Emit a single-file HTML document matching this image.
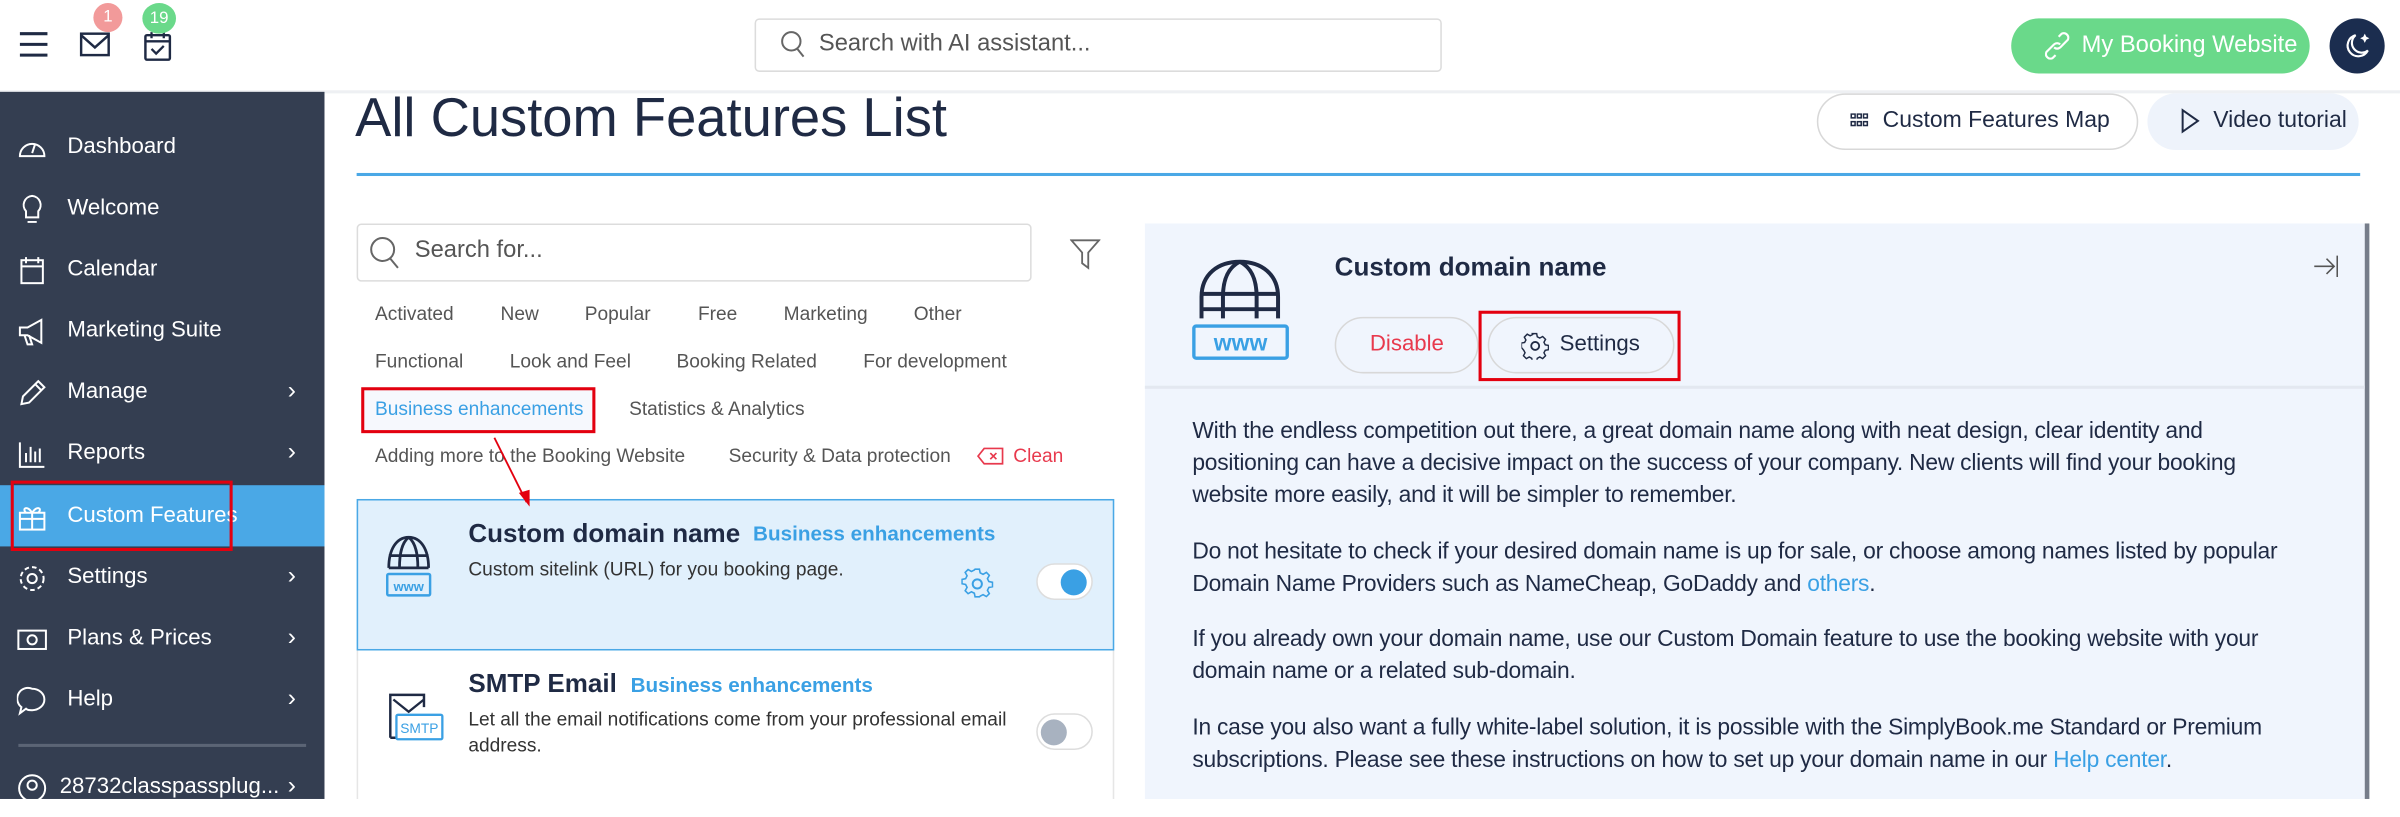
<!DOCTYPE html>
<html><head><meta charset="utf-8"><style>
*{margin:0;padding:0;box-sizing:border-box}
html,body{width:2400px;height:799px;overflow:hidden;background:#fff}
#s{position:absolute;left:0;top:0;width:1568px;height:522px;transform:scale(1.5306);transform-origin:0 0;font-family:"Liberation Sans",sans-serif;color:#1f2a44}
.a{position:absolute;white-space:nowrap}
.side{position:absolute;left:0;top:60px;width:212px;height:462px;background:#343e51}
.si{position:absolute;left:0;width:212px;height:40px;color:#fff;font-size:14.5px;line-height:40px;padding-left:44px}
.si svg{position:absolute;left:11px;top:11px}
.si .ch{position:absolute;left:188px;top:0;font-size:16px;color:#fff}
.tag{position:absolute;font-size:12.5px;color:#555;white-space:nowrap}
.para{position:absolute;left:779px;font-size:14.9px;line-height:21px;color:#1f2a44;white-space:nowrap;letter-spacing:-0.15px}
.lnk{color:#3aa0e4}
</style></head><body><div id="s">
<div class="a" style="left:0;top:59px;width:1568px;height:2px;background:#eef0f3"></div>
<svg class="a" style="left:12px;top:20px" width="20" height="18"><path d="M1 2h18M1 9h18M1 16h18" stroke="#1f2a44" stroke-width="2"/></svg>
<svg class="a" style="left:52px;top:21px" width="20" height="16"><rect x="1" y="1" width="18" height="14" fill="none" stroke="#1f2a44" stroke-width="1.6"/><path d="M1 2l9 8 9-8" fill="none" stroke="#1f2a44" stroke-width="1.6"/></svg>
<div class="a" style="left:61px;top:2px;width:19px;height:19px;border-radius:50%;background:#f29a9a;color:#fff;font-size:11px;text-align:center;line-height:19px">1</div>
<svg class="a" style="left:94px;top:20px" width="18" height="20"><rect x="1" y="3" width="16" height="16" rx="1" fill="none" stroke="#1f2a44" stroke-width="1.6"/><path d="M1 7h16M5 1v4M13 1v4M5 12l3 3 5-5" fill="none" stroke="#1f2a44" stroke-width="1.5"/></svg>
<div class="a" style="left:93px;top:2px;width:22px;height:20px;border-radius:50%;background:#6ad98a;color:#fff;font-size:11px;text-align:center;line-height:20px">19</div>
<div class="a" style="left:493px;top:12px;width:449px;height:35px;border:1px solid #dcdcdc;border-radius:3px"></div>
<svg class="a" style="left:510px;top:20px" width="16" height="18"><circle cx="7" cy="7" r="6" fill="none" stroke="#666" stroke-width="1.3"/><path d="M11 12l4 5" stroke="#666" stroke-width="1.3"/></svg>
<div class="a" style="left:535px;top:20px;font-size:15.5px;color:#555">Search with AI assistant...</div>
<div class="a" style="left:1314px;top:12px;width:195px;height:36px;border-radius:18px;background:#6ad98a"></div>
<svg class="a" style="left:1336px;top:21px" width="16" height="18"><path d="M9 3l2-2a3 3 0 014 4l-5 5a3 3 0 01-4 0M7 15l-2 2a3 3 0 01-4-4l5-5a3 3 0 014 0" fill="none" stroke="#fff" stroke-width="1.4"/></svg>
<div class="a" style="left:1360px;top:21px;font-size:15.5px;color:#fff">My Booking Website</div>
<div class="a" style="left:1522px;top:12px;width:36px;height:36px;border-radius:50%;background:#1b2d4f"></div>
<svg class="a" style="left:1530px;top:20px" width="20" height="20"><path d="M9 3a7 7 0 108 10A6 6 0 019 3z" fill="none" stroke="#fff" stroke-width="1.4"/><path d="M15 2l1 2 2 1-2 1-1 2-1-2-2-1 2-1z" fill="#fff"/></svg>
<div class="side"></div>
<div class="si" style="top:76px"><svg width="20" height="18"><path d="M2 15a8 8 0 1116 0z" fill="none" stroke="#fff" stroke-width="1.3"/><path d="M10 13l2-6" stroke="#fff" stroke-width="1.3"/></svg>Dashboard</div>
<div class="si" style="top:116px"><svg width="20" height="20"><path d="M10 1a6 6 0 00-4 10v4h8v-4a6 6 0 00-4-10zM7 18h6" fill="none" stroke="#fff" stroke-width="1.3"/></svg>Welcome</div>
<div class="si" style="top:156px"><svg width="20" height="20"><rect x="3" y="3" width="14" height="15" fill="none" stroke="#fff" stroke-width="1.3"/><path d="M3 7h14M6 1v4M14 1v4" stroke="#fff" stroke-width="1.3"/></svg>Calendar</div>
<div class="si" style="top:196px"><svg width="20" height="20"><path d="M2 7h5l9-5v15l-9-5H2zM5 12l2 6h3l-2-6" fill="none" stroke="#fff" stroke-width="1.3"/></svg>Marketing Suite</div>
<div class="si" style="top:236px"><svg width="20" height="20"><path d="M3 17l1-5L14 2l4 4L8 16zM12 4l4 4" fill="none" stroke="#fff" stroke-width="1.3"/></svg>Manage<span class="ch">›</span></div>
<div class="si" style="top:276px"><svg width="20" height="20"><path d="M2 2v16h16M6 15V9M9 15V5M12 15V8M15 15V6" fill="none" stroke="#fff" stroke-width="1.3"/></svg>Reports<span class="ch">›</span></div>
<div class="si" style="top:317px;background:#4aa8e6"><svg width="20" height="20"><rect x="2" y="7" width="16" height="11" fill="none" stroke="#fff" stroke-width="1.3"/><path d="M10 7v11M2 11h16M10 7c-3-5-7-3-4 0M10 7c3-5 7-3 4 0" fill="none" stroke="#fff" stroke-width="1.3"/></svg>Custom Features</div>
<div class="a" style="left:7px;top:314px;width:145px;height:46px;border:2px solid #e3000f"></div>
<div class="si" style="top:357px"><svg width="20" height="20"><circle cx="10" cy="10" r="3" fill="none" stroke="#fff" stroke-width="1.3"/><circle cx="10" cy="10" r="7.5" fill="none" stroke="#fff" stroke-width="1.3" stroke-dasharray="3 2"/></svg>Settings<span class="ch">›</span></div>
<div class="si" style="top:397px"><svg width="20" height="20"><rect x="1" y="4" width="18" height="12" fill="none" stroke="#fff" stroke-width="1.3"/><circle cx="10" cy="10" r="3" fill="none" stroke="#fff" stroke-width="1.3"/></svg>Plans &amp; Prices<span class="ch">›</span></div>
<div class="si" style="top:437px"><svg width="20" height="20"><path d="M10 2a8 7 0 110 14c-2 0-3 0-4-1l-4 3 1-4a7 7 0 017-12z" fill="none" stroke="#fff" stroke-width="1.3"/></svg>Help<span class="ch">›</span></div>
<div class="a" style="left:12px;top:486px;width:188px;height:2px;background:#5b6475"></div>
<div class="si" style="top:494px;padding-left:39px"><svg width="20" height="20"><circle cx="10" cy="10" r="8.5" fill="none" stroke="#fff" stroke-width="1.3"/><circle cx="10" cy="8" r="3" fill="none" stroke="#fff" stroke-width="1.3"/></svg>28732classpassplug...<span class="ch">›</span></div>
<div class="a" style="left:232px;top:57px;font-size:35.5px;color:#1f2a44">All Custom Features List</div>
<div class="a" style="left:233px;top:113px;width:1309px;height:2px;background:#4aa8e6"></div>
<div class="a" style="left:1187px;top:61px;width:210px;height:37px;border:1px solid #d8d8d8;border-radius:19px;background:#fff"></div>
<svg class="a" style="left:1209px;top:74px" width="12" height="10"><g fill="none" stroke="#1f2a44" stroke-width="1"><rect x=".5" y=".5" width="2.5" height="2.5"/><rect x="4.5" y=".5" width="2.5" height="2.5"/><rect x="8.5" y=".5" width="2.5" height="2.5"/><rect x=".5" y="5.5" width="2.5" height="2.5"/><rect x="4.5" y="5.5" width="2.5" height="2.5"/><rect x="8.5" y="5.5" width="2.5" height="2.5"/></g></svg>
<div class="a" style="left:1230px;top:70px;font-size:15px">Custom Features Map</div>
<div class="a" style="left:1403px;top:61px;width:138px;height:37px;border-radius:19px;background:#eef3fb"></div>
<svg class="a" style="left:1424px;top:70px" width="14" height="18"><path d="M2 2l10 7-10 7z" fill="none" stroke="#1f2a44" stroke-width="1.3"/></svg>
<div class="a" style="left:1446px;top:70px;font-size:15px">Video tutorial</div>
<div class="a" style="left:233px;top:146px;width:441px;height:38px;border:1px solid #dcdcdc;border-radius:3px"></div>
<svg class="a" style="left:241px;top:154px" width="22" height="24"><circle cx="9" cy="9" r="7.5" fill="none" stroke="#666" stroke-width="1.3"/><path d="M14 15l5 6" stroke="#666" stroke-width="1.3"/></svg>
<div class="a" style="left:271px;top:155px;font-size:15.5px;color:#555">Search for...</div>
<svg class="a" style="left:699px;top:155px" width="20" height="22"><path d="M1 2h18l-7 8v10l-4-3v-7z" fill="none" stroke="#666" stroke-width="1.2"/></svg>
<div class="tag" style="left:245px;top:198px">Activated</div><div class="tag" style="left:327px;top:198px">New</div><div class="tag" style="left:382px;top:198px">Popular</div><div class="tag" style="left:456px;top:198px">Free</div><div class="tag" style="left:512px;top:198px">Marketing</div><div class="tag" style="left:597px;top:198px">Other</div>
<div class="tag" style="left:245px;top:229px">Functional</div><div class="tag" style="left:333px;top:229px">Look and Feel</div><div class="tag" style="left:442px;top:229px">Booking Related</div><div class="tag" style="left:564px;top:229px">For development</div>
<div class="a" style="left:236px;top:253px;width:153px;height:30px;border:2px solid #e3000f;background:#f6f8fd"></div>
<div class="tag" style="left:245px;top:260px;color:#3aa0e4">Business enhancements</div><div class="tag" style="left:411px;top:260px">Statistics &amp; Analytics</div>
<div class="tag" style="left:245px;top:291px">Adding more to the Booking Website</div><div class="tag" style="left:476px;top:291px">Security &amp; Data protection</div>
<svg class="a" style="left:638px;top:292px" width="18" height="12"><path d="M5 1h12v10H5L1 6z" fill="none" stroke="#e8394d" stroke-width="1.1"/><path d="M9 4l4 4M13 4l-4 4" stroke="#e8394d" stroke-width="1.1"/></svg>
<div class="tag" style="left:662px;top:291px;color:#e8394d">Clean</div>
<div class="a" style="left:233px;top:326px;width:495px;height:99px;background:#e1f0fc;border:1.5px solid #4aa8e6"></div>
<svg class="a" style="left:249px;top:348px" width="40" height="46"><path d="M5 23C5 11 10 3 18 3s13 8 13 20M18 3c-5 4-6 12-6 20M18 3c5 4 6 12 6 20M5 15h26M5 23h26" fill="none" stroke="#1f2a44" stroke-width="1.8"/><rect x="4" y="27" width="28" height="14" rx="1" fill="none" stroke="#3aa0e4" stroke-width="1.6"/><text x="18" y="38" font-size="8.5" font-weight="bold" fill="#3aa0e4" text-anchor="middle" font-family="Liberation Sans">www</text></svg>
<div class="a" style="left:306px;top:339px;font-size:17px;font-weight:bold;color:#1f2a44">Custom domain name</div>
<div class="a" style="left:492px;top:341px;font-size:13.5px;font-weight:bold;color:#3aa0e4">Business enhancements</div>
<div class="a" style="left:306px;top:365px;font-size:12.5px;color:#333">Custom sitelink (URL) for you booking page.</div>
<svg class="a" style="left:628px;top:371px" width="21" height="21"><circle cx="10.5" cy="10.5" r="3" fill="none" stroke="#3aa0e4" stroke-width="1.3"/><path d="M9 2h3l.5 2.5 2 1 2.3-1.3 2 2-1.3 2.3 1 2 2.5.5v3l-2.5.5-1 2 1.3 2.3-2 2-2.3-1.3-2 1L12 21H9l-.5-2.5-2-1-2.3 1.3-2-2 1.3-2.3-1-2L0 12V9l2.5-.5 1-2L2.2 4.2l2-2 2.3 1.3 2-1z" fill="none" stroke="#3aa0e4" stroke-width="1.1" transform="translate(.5 -1) scale(.95)"/></svg>
<div class="a" style="left:677px;top:368px;width:37px;height:24px;border-radius:12px;background:#fff;border:1px solid #ddd"></div>
<div class="a" style="left:693px;top:372px;width:17px;height:17px;border-radius:50%;background:#3aa0e4"></div>
<div class="a" style="left:233px;top:425px;width:495px;height:97px;background:#fff;border-left:1px solid #e6e6e6;border-right:1px solid #e6e6e6"></div>
<svg class="a" style="left:249px;top:450px" width="44" height="40"><path d="M6 32V4h22v8M6 32h6" fill="none" stroke="#1f2a44" stroke-width="1.6"/><path d="M8 7l10 8 10-8" fill="none" stroke="#1f2a44" stroke-width="1.5"/><rect x="10" y="17" width="30" height="16" rx="1" fill="#fff" stroke="#3aa0e4" stroke-width="1.5"/><text x="25" y="29" font-size="9" fill="#3aa0e4" text-anchor="middle" font-family="Liberation Sans">SMTP</text></svg>
<div class="a" style="left:306px;top:437px;font-size:17px;font-weight:bold;color:#1f2a44">SMTP Email</div>
<div class="a" style="left:412px;top:440px;font-size:13.5px;font-weight:bold;color:#3aa0e4">Business enhancements</div>
<div class="a" style="left:306px;top:462px;font-size:12.5px;line-height:17px;color:#333">Let all the email notifications come from your professional email<br>address.</div>
<div class="a" style="left:677px;top:466px;width:37px;height:24px;border-radius:12px;background:#fff;border:1px solid #ddd"></div>
<div class="a" style="left:680px;top:470px;width:17px;height:17px;border-radius:50%;background:#a8b2c0"></div>
<svg class="a" style="left:315px;top:282px" width="40" height="52"><path d="M8 4l21 42" stroke="#e3000f" stroke-width="1.2"/><path d="M24 40l7 9 0-11z" fill="#e3000f"/></svg>
<div class="a" style="left:748px;top:146px;width:800px;height:376px;background:#f0f5fd"></div>
<div class="a" style="left:1545px;top:146px;width:3px;height:376px;background:#767d8a"></div>
<div class="a" style="left:748px;top:252px;width:797px;height:2px;background:#e3e8f0"></div>
<svg class="a" style="left:776px;top:168px" width="70" height="68"><path d="M9 40V26C9 11 20 3 34 3s25 8 25 23v14M34 3c-10 5-11 16-11 23v14M34 3c10 5 11 16 11 23v14M9 24h50M9 34h50" fill="none" stroke="#1f2a44" stroke-width="2.6"/><rect x="4" y="45" width="61" height="21" rx="1.5" fill="none" stroke="#3aa0e4" stroke-width="2.2"/><text x="34.5" y="61" font-size="15" font-weight="bold" fill="#3aa0e4" text-anchor="middle" font-family="Liberation Sans">www</text></svg>
<div class="a" style="left:872px;top:165px;font-size:17px;font-weight:bold;color:#1f2a44">Custom domain name</div>
<svg class="a" style="left:1511px;top:166px" width="18" height="16"><path d="M1 8h13M9 3l5 5-5 5M16 1v14" fill="none" stroke="#555" stroke-width="1"/></svg>
<div class="a" style="left:872px;top:207px;width:94px;height:37px;border:1px solid #d8d8d8;border-radius:19px;background:#f0f5fd"></div>
<div class="a" style="left:895px;top:217px;font-size:14.5px;color:#e8394d">Disable</div>
<div class="a" style="left:966px;top:203px;width:132px;height:46px;border:2px solid #e3000f"></div>
<div class="a" style="left:972px;top:207px;width:122px;height:37px;border:1px solid #d8d8d8;border-radius:19px;background:#f0f5fd"></div>
<svg class="a" style="left:994px;top:217px" width="18" height="18"><circle cx="9" cy="9" r="2.6" fill="none" stroke="#1f2a44" stroke-width="1.2"/><path d="M7.5 1h3l.4 2.2 1.7.9 2-1.1 2 2-1.1 2 .9 1.7 2.2.4v3l-2.2.4-.9 1.7 1.1 2-2 2-2-1.1-1.7.9-.4 2.2h-3l-.4-2.2-1.7-.9-2 1.1-2-2 1.1-2-.9-1.7L0 10.5v-3l2.2-.4.9-1.7-1.1-2 2-2 2 1.1 1.7-.9z" fill="none" stroke="#1f2a44" stroke-width="1" transform="scale(.95)"/></svg>
<div class="a" style="left:1019px;top:217px;font-size:14.5px;color:#1f2a44">Settings</div>
<div class="para" style="top:272px">With the endless competition out there, a great domain name along with neat design, clear identity and<br>positioning can have a decisive impact on the success of your company. New clients will find your booking<br>website more easily, and it will be simpler to remember.</div>
<div class="para" style="top:351px">Do not hesitate to check if your desired domain name is up for sale, or choose among names listed by popular<br>Domain Name Providers such as NameCheap, GoDaddy and <span class="lnk">others</span>.</div>
<div class="para" style="top:408px">If you already own your domain name, use our Custom Domain feature to use the booking website with your<br>domain name or a related sub-domain.</div>
<div class="para" style="top:466px">In case you also want a fully white-label solution, it is possible with the SimplyBook.me Standard or Premium<br>subscriptions. Please see these instructions on how to set up your domain name in our <span class="lnk">Help center</span>.</div>
</div></body></html>
